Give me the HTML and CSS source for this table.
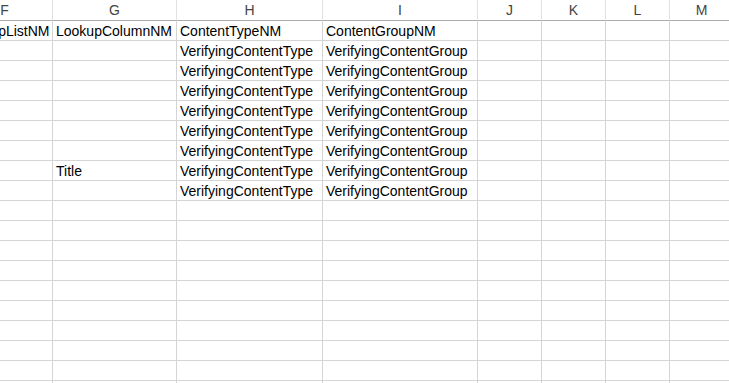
FILE: index.html
```html
<!DOCTYPE html>
<html lang="en">
<head>
    <meta charset="UTF-8">
    <meta name="viewport" content="width=device-width, initial-scale=1.0">
    <title>Sheet1</title>
    <link rel="stylesheet" href="styles.css">
</head>
<body>
    <table class="sheet">
        <colgroup>
            <col class="c-f"><col class="c-g"><col class="c-h"><col class="c-i">
            <col class="c-std"><col class="c-std"><col class="c-std"><col class="c-std">
        </colgroup>
        <thead>
            <tr>
                <th>F</th><th>G</th><th>H</th><th>I</th><th>J</th><th>K</th><th>L</th><th>M</th>
            </tr>
        </thead>
        <tbody id="rows">
            <tr><td>LookupListNM</td><td>LookupColumnNM</td><td>ContentTypeNM</td><td>ContentGroupNM</td><td></td><td></td><td></td><td></td></tr>
            <tr><td></td><td></td><td>VerifyingContentType</td><td>VerifyingContentGroup</td><td></td><td></td><td></td><td></td></tr>
            <tr><td></td><td></td><td>VerifyingContentType</td><td>VerifyingContentGroup</td><td></td><td></td><td></td><td></td></tr>
            <tr><td></td><td></td><td>VerifyingContentType</td><td>VerifyingContentGroup</td><td></td><td></td><td></td><td></td></tr>
            <tr><td></td><td></td><td>VerifyingContentType</td><td>VerifyingContentGroup</td><td></td><td></td><td></td><td></td></tr>
            <tr><td></td><td></td><td>VerifyingContentType</td><td>VerifyingContentGroup</td><td></td><td></td><td></td><td></td></tr>
            <tr><td></td><td></td><td>VerifyingContentType</td><td>VerifyingContentGroup</td><td></td><td></td><td></td><td></td></tr>
            <tr><td></td><td>Title</td><td>VerifyingContentType</td><td>VerifyingContentGroup</td><td></td><td></td><td></td><td></td></tr>
            <tr><td></td><td></td><td>VerifyingContentType</td><td>VerifyingContentGroup</td><td></td><td></td><td></td><td></td></tr>
        </tbody>
    </table>

    <script>
        // pad the sheet with empty rows down past the bottom of the window
        let rows = document.getElementById("rows");
        for (let i = 0; i < 10; i++) {
            let row = "<tr>";
            for (let j = 0; j < 8; j++) row += "<td></td>";
            rows.innerHTML += row + "</tr>";
        }
    </script>
</body>
</html>
```

FILE: styles.css
```css
body { margin: 0; overflow: hidden; background: #fff; font-family: "Liberation Sans", Arial, sans-serif; }

.sheet { table-layout: fixed; border-collapse: separate; border-spacing: 0; margin-left: -43px; width: 777px; }
.c-f { width: 96px; }
.c-g { width: 124px; }
.c-h { width: 146px; }
.c-i { width: 155px; }
.c-std { width: 64px; }

th, td { box-sizing: border-box; padding: 0 3px; white-space: nowrap; overflow: hidden; }
th { height: 21px; font-weight: normal; font-size: 14px; color: #444; text-align: center; border-right: 1px solid #e2e2e2; border-bottom: 1px solid #ababab; }
td { height: 20px; font-size: 14px; color: #000; text-align: left; vertical-align: middle; border-right: 1px solid #d4d4d4; border-bottom: 1px solid #d4d4d4; }
td:first-child { text-align: right; overflow: visible; }
```
